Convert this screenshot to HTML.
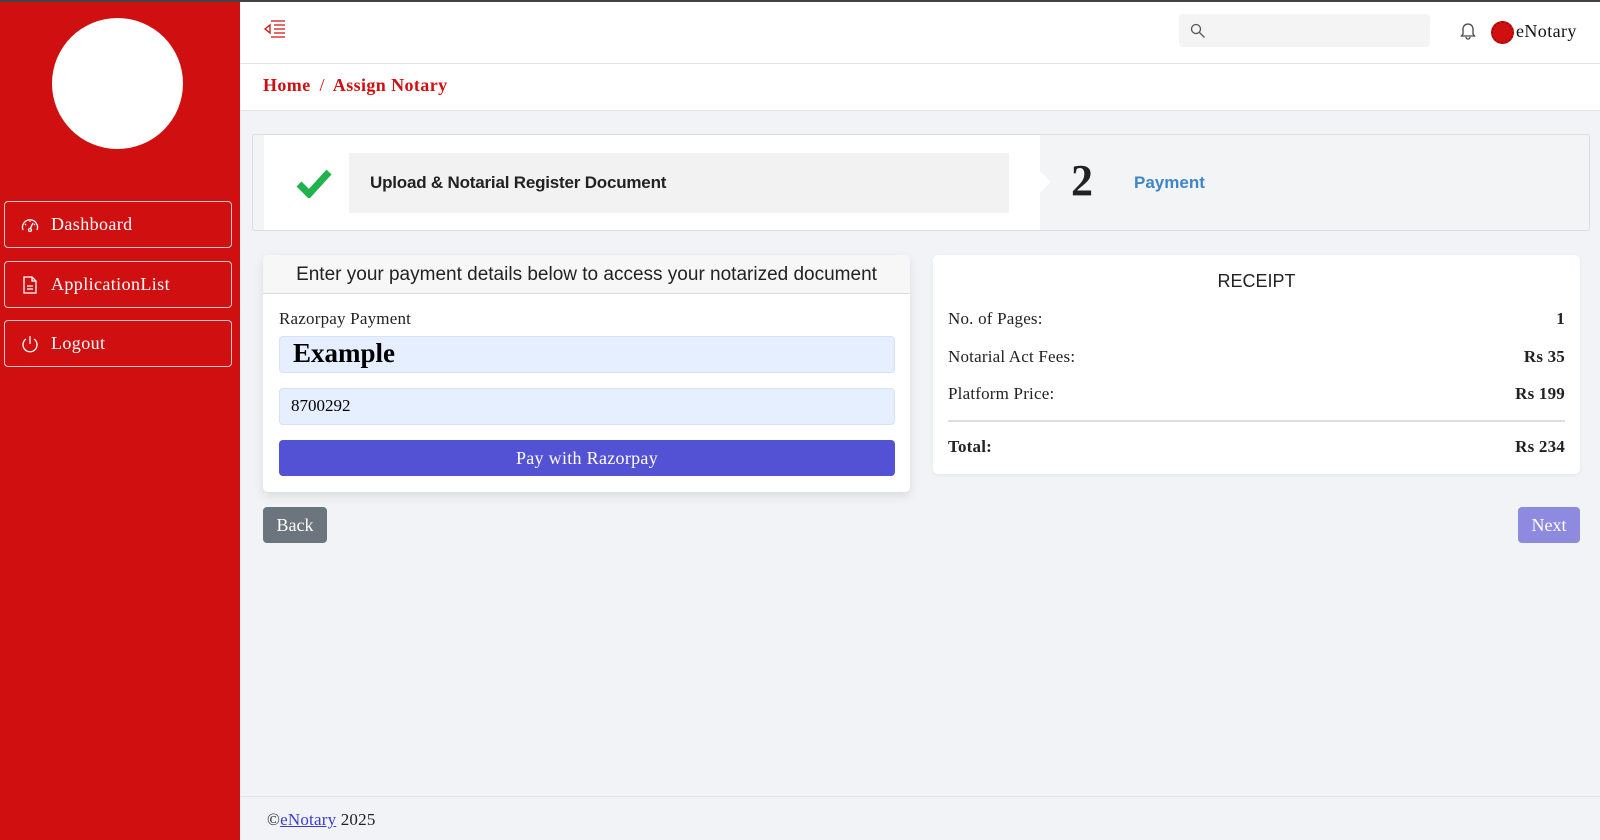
<!DOCTYPE html>
<html><head><meta charset="utf-8"><style>
*{box-sizing:border-box;margin:0;padding:0}
body{width:1600px;height:840px;overflow:hidden;background:#f2f3f6;font-family:"Liberation Serif",serif;position:relative;color:#222}
.a{position:absolute}
.side{left:0;top:0;width:240px;height:840px;background:#d01010}
.topbar{left:0;top:0;width:1600px;height:2px;background:#444;z-index:5}
.circle{left:52px;top:18px;width:131px;height:131px;border-radius:50%;background:#fff}
.nav{left:4px;width:228px;height:47px;border:1.5px solid #f3c6c6;border-radius:4px;color:#fff;font-size:18px;letter-spacing:.4px;display:flex;align-items:center;padding-left:46px}
.nav svg{position:absolute;left:15px;top:13px}
.header{left:240px;top:2px;width:1360px;height:62px;background:#fff;border-bottom:1px solid #e3e3e3}
.crumb{left:240px;top:64px;width:1360px;height:47px;background:#fff;border-bottom:1px solid #e3e3e3}
.card{background:#fff;border-radius:5px;box-shadow:0 4px 10px rgba(0,0,0,.1)}
.inp{left:279px;width:616px;height:37px;background:#e6efff;border:1px solid #d8e2f2;border-radius:4px}
.row{left:948px;width:617px;display:flex;justify-content:space-between;font-size:17px;letter-spacing:.2px;color:#222}
</style></head><body>
<div class="a topbar"></div>
<div class="a side"></div>
<div class="a circle"></div>
<div class="a nav" style="top:201px">
<svg width="20" height="20" viewBox="0 0 20 20" fill="none" stroke="#fff" stroke-width="1.3"><path d="M3 15a7.5 7.5 0 1 1 14 0"/><path d="M10 14l3-6"/><circle cx="10" cy="15" r="1.5"/><path d="M5 9l1 1M10 6v1M15 9l-1 1"/></svg>Dashboard</div>
<div class="a nav" style="top:261px">
<svg width="20" height="20" viewBox="0 0 20 20" fill="none" stroke="#fff" stroke-width="1.3"><path d="M4 2h8l4 4v12H4z"/><path d="M12 2v4h4M7 11h6M7 14h6"/></svg>ApplicationList</div>
<div class="a nav" style="top:320px">
<svg width="20" height="20" viewBox="0 0 20 20" fill="none" stroke="#fff" stroke-width="1.3"><path d="M6 5a7 7 0 1 0 8 0"/><path d="M10 2v8"/></svg>Logout</div>

<div class="a header"></div>
<svg class="a" style="left:263px;top:20px" width="22" height="18" viewBox="0 0 22 18" fill="none" stroke="#d01010" stroke-width="1.3"><path d="M8 1h14M11 5h11M11 9h11M11 13h11M8 17h14M7 5L2 9l5 4z"/></svg>
<div class="a" style="left:1179px;top:14px;width:251px;height:33px;background:#f4f4f4;border-radius:4px"></div>
<svg class="a" style="left:1190px;top:23px" width="16" height="16" viewBox="0 0 16 16" fill="none" stroke="#555" stroke-width="1.3"><circle cx="6" cy="6" r="4.5"/><path d="M9.5 9.5l5 5"/></svg>
<svg class="a" style="left:1459px;top:21px" width="18" height="19" viewBox="0 0 18 19" fill="none" stroke="#444" stroke-width="1.3"><path d="M4 13V8a5 5 0 0 1 10 0v5l1.5 2h-13z"/><path d="M7 16a2 2 0 0 0 4 0"/></svg>
<div class="a" style="left:1491px;top:21px;width:23px;height:23px;border-radius:50%;background:#d01010;border:2px dotted #a00"></div>
<div class="a" style="left:1516px;top:21px;font-size:18px;letter-spacing:.4px;color:#111">eNotary</div>

<div class="a crumb"></div>
<div class="a" style="left:263px;top:75px;font-size:18px;letter-spacing:.4px;font-weight:bold;color:#d01010">Home <span style="font-weight:normal;margin:0 4px">/</span> Assign Notary</div>

<div class="a" style="left:252px;top:134px;width:1338px;height:97px;background:#f3f4f6;border:1px solid #dcdcdc;border-radius:3px"></div>
<div class="a" style="left:264px;top:135px;width:776px;height:95px;background:#fff"></div>
<div class="a" style="left:1034px;top:175px;width:14px;height:14px;background:#fff;transform:rotate(45deg)"></div>
<svg class="a" style="left:296px;top:168px" width="36" height="30" viewBox="0 0 36 30"><path d="M3 16l10 10L33 4" fill="none" stroke="#21b24b" stroke-width="7"/></svg>
<div class="a" style="left:349px;top:153px;width:660px;height:60px;background:#f2f2f2"></div>
<div class="a" style="left:370px;top:173px;font-family:'Liberation Sans',sans-serif;font-size:17px;font-weight:bold;letter-spacing:-.2px;color:#222">Upload &amp; Notarial Register Document</div>
<div class="a" style="left:1071px;top:155px;font-size:44px;font-weight:bold;color:#222">2</div>
<div class="a" style="left:1112px;top:153px;width:435px;height:60px;background:#f3f4f6"></div>
<div class="a" style="left:1134px;top:173px;font-family:'Liberation Sans',sans-serif;font-size:17px;font-weight:bold;color:#3f86c6">Payment</div>

<div class="a card" style="left:263px;top:255px;width:647px;height:237px"></div>
<div class="a" style="left:263px;top:255px;width:647px;height:39px;background:#f7f7f7;border-bottom:1.5px solid #ddd;border-radius:5px 5px 0 0;text-align:center;font-family:'Liberation Sans',sans-serif;font-size:19px;line-height:39px;color:#222">Enter your payment details below to access your notarized document</div>
<div class="a" style="left:279px;top:309px;font-size:17px;letter-spacing:.2px">Razorpay Payment</div>
<div class="a inp" style="top:336px"></div>
<div class="a" style="left:293px;top:335px;font-size:27px;font-weight:bold;color:#000;line-height:36px">Example</div>
<div class="a inp" style="top:388px"></div>
<div class="a" style="left:291px;top:396px;font-size:17px;color:#000">8700292</div>
<div class="a" style="left:279px;top:440px;width:616px;height:36px;background:#5352d4;border-radius:4px;color:#fff;text-align:center;line-height:36px;font-size:18px;letter-spacing:.3px">Pay with Razorpay</div>

<div class="a card" style="left:933px;top:255px;width:647px;height:219px;box-shadow:0 1px 4px rgba(0,0,0,.06)"></div>
<div class="a" style="left:933px;top:271px;width:647px;text-align:center;font-family:'Liberation Sans',sans-serif;font-size:18px;color:#222">RECEIPT</div>
<div class="a row" style="top:309px"><span>No. of Pages:</span><b>1</b></div>
<div class="a row" style="top:347px"><span>Notarial Act Fees:</span><b>Rs 35</b></div>
<div class="a row" style="top:384px"><span>Platform Price:</span><b>Rs 199</b></div>
<div class="a" style="left:948px;top:420px;width:617px;height:2px;background:#ddd"></div>
<div class="a row" style="top:437px"><b>Total:</b><b>Rs 234</b></div>

<div class="a" style="left:263px;top:507px;width:64px;height:36px;background:#6c757d;border-radius:4px;color:#fff;text-align:center;line-height:36px;font-size:18px">Back</div>
<div class="a" style="left:1518px;top:507px;width:62px;height:36px;background:#8d8ae0;border-radius:4px;color:#fff;text-align:center;line-height:36px;font-size:18px">Next</div>

<div class="a" style="left:240px;top:796px;width:1360px;height:44px;background:#f2f3f6;border-top:1px solid #e3e3e3"></div>
<div class="a" style="left:267px;top:810px;font-size:17px;letter-spacing:.2px;color:#222">©<span style="color:#3b3bd6;text-decoration:underline">eNotary</span> 2025</div>
</body></html>
